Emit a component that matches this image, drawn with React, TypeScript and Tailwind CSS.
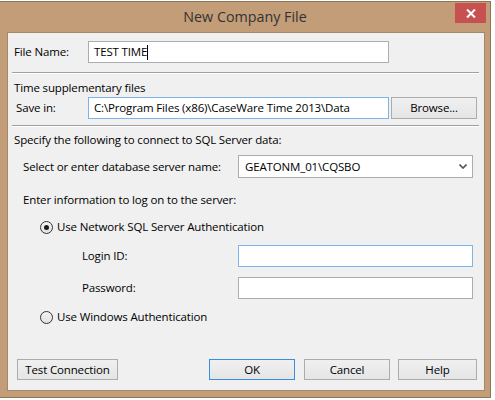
import type { ReactNode } from 'react';

const ui = "font-['Segoe_UI','Open_Sans',sans-serif] text-[11.5px] tracking-[-0.15px] text-black";

function Field({ w, focus, children }: { w: string; focus?: boolean; children?: ReactNode }) {
  return (
    <div
      className={`${w} h-[22px] bg-white border ${focus ? 'border-[#7EB4EA]' : 'border-[#ABADB3]'} flex items-center pl-[5px] whitespace-nowrap overflow-hidden`}
    >
      {children}
    </div>
  );
}

function Btn({ w, primary, className = '', children }: { w: string; primary?: boolean; className?: string; children: ReactNode }) {
  return (
    <div
      className={`${w} ${className} h-[21px] flex items-center justify-center border ${primary ? 'border-[#3C8CE0]' : 'border-[#ACACAC]'} bg-gradient-to-b from-[#F0F0F0] to-[#E5E5E5]`}
    >
      {children}
    </div>
  );
}

function Radio({ checked, label }: { checked?: boolean; label: string }) {
  return (
    <div className="h-[16px] flex items-center pl-[32px]">
      <div className="w-[13px] h-[13px] rounded-full border border-[#333333] bg-gradient-to-b from-[#F4F4F4] to-[#E2E2E2] flex items-center justify-center">
        {checked && <div className="w-[5px] h-[5px] rounded-full bg-[#1A1A1A]" />}
      </div>
      <span className="ml-[4px] leading-[16px]">{label}</span>
    </div>
  );
}

function Sep({ className }: { className: string }) {
  return <div className={`${className} ml-[4px] w-[467px] h-[2px] border-t border-[#A0A0A0] border-b border-b-white`} />;
}

export default function App() {
  return (
    <div className={`w-[495px] h-[400px] bg-white overflow-hidden ${ui}`}>
      {/* window frame */}
      <div className="mt-[1px] w-[491px] h-[397px] bg-[#C29D78] border-t border-r border-b border-[#8E7458]">
        {/* title bar */}
        <div className="relative h-[30px] flex items-center justify-center">
          <span className="text-[14.3px] tracking-normal text-[#333333]">New Company File</span>
          <div className="absolute top-[1px] right-[4px] w-[31px] h-[20px] bg-[#C75050] flex items-center justify-center">
            <svg width="10" height="9" viewBox="0 0 10 9">
              <path d="M1 0.5 L9 8.5 M9 0.5 L1 8.5" stroke="white" strokeWidth="2" />
            </svg>
          </div>
        </div>

        {/* client area */}
        <div className="ml-[7px] w-[478px] h-[359px] bg-[#F0F0F0] border border-[#A3886B] flex flex-col">
          <div className="mt-[8px] h-[22px] flex items-center">
            <span className="w-[80px] pl-[6px]">File Name:</span>
            <Field w="w-[301px]">
              <span>TEST TIME</span>
              <span className="w-px h-[15px] bg-black" />
            </Field>
          </div>

          <Sep className="mt-[9px]" />

          <div className="mt-[6px] h-[16px] leading-[16px] pl-[6px]">Time supplementary files</div>

          <div className="mt-[1px] h-[22px] flex items-center">
            <span className="w-[80px] pl-[8px]">Save in:</span>
            <Field w="w-[301px]" focus>
              C:\Program Files (x86)\CaseWare Time 2013\Data
            </Field>
            <Btn w="w-[86px]" className="ml-[2px] h-[22px]">Browse...</Btn>
          </div>

          <Sep className="mt-[6px]" />

          <div className="mt-[5px] h-[16px] leading-[16px] pl-[6px]">Specify the following to connect to SQL Server data:</div>

          <div className="mt-[7px] h-[23px] flex items-center">
            <span className="w-[230px] pl-[15px]">Select or enter database server name:</span>
            <div className="w-[235px] h-[23px] bg-white border border-[#ACACAC] flex items-center pl-[6px] pr-[5px]">
              <span className="flex-1">GEATONM_01\CQSBO</span>
              <svg width="8" height="5" viewBox="0 0 8 5">
                <path d="M0.5 0.5 L4 4 L7.5 0.5" stroke="#555555" strokeWidth="1.6" fill="none" />
              </svg>
            </div>
          </div>

          <div className="mt-[14px] h-[16px] leading-[16px] pl-[15px]">Enter information to log on to the server:</div>

          <div className="mt-[11px]">
            <Radio checked label="Use Network SQL Server Authentication" />
          </div>

          <div className="mt-[10px] h-[22px] flex items-center">
            <span className="w-[230px] pl-[74px]">Login ID:</span>
            <Field w="w-[235px]" focus />
          </div>

          <div className="mt-[10px] h-[22px] flex items-center">
            <span className="w-[230px] pl-[74px]">Password:</span>
            <Field w="w-[235px]" />
          </div>

          <div className="mt-[10px]">
            <Radio label="Use Windows Authentication" />
          </div>

          <div className="mt-[34px] flex items-center pl-[9px]">
            <Btn w="w-[101px]">Test Connection</Btn>
            <Btn w="w-[86px]" primary className="ml-[91px]">OK</Btn>
            <Btn w="w-[86px]" className="ml-[9px]">Cancel</Btn>
            <Btn w="w-[79px]" className="ml-[8px]">Help</Btn>
          </div>
        </div>
      </div>
    </div>
  );
}
